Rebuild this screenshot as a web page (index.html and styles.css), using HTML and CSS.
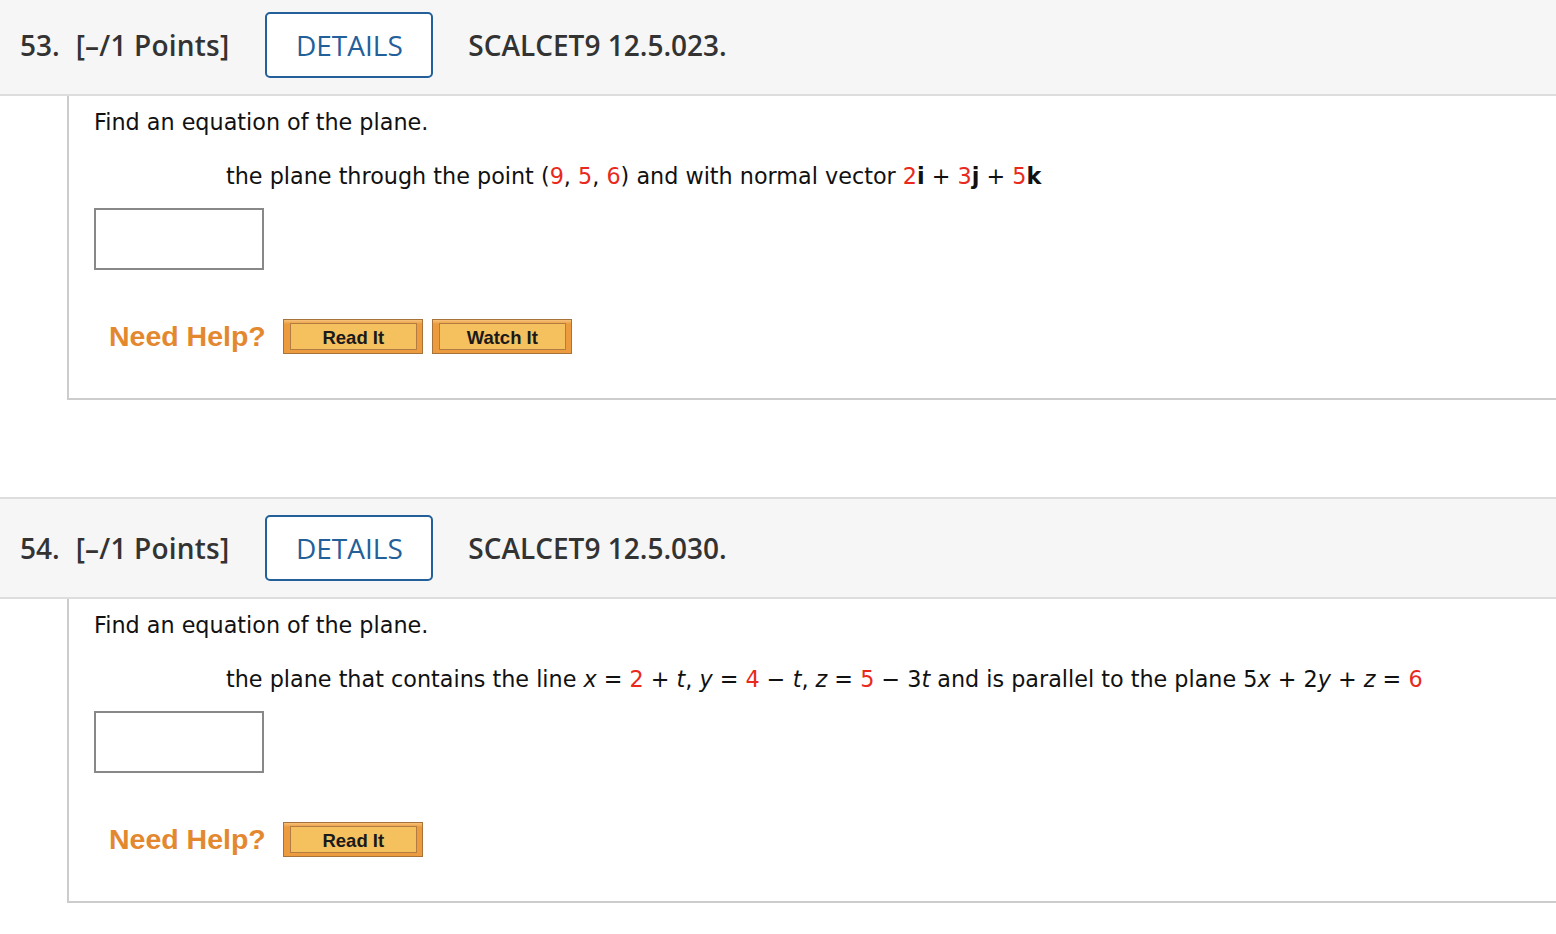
FILE: index.html
```html
<!DOCTYPE html>
<html>
<head>
<meta charset="utf-8">
<link rel="stylesheet" href="styles.css">
</head>
<body>
<div class="page">
  <section class="question">
    <div class="qhead">
      <span class="qnum">53.</span>
      <span class="qpts">[–/1 Points]</span>
      <button class="details">DETAILS</button>
      <span class="qcode">SCALCET9 12.5.023.</span>
    </div>
    <div class="qbody">
      <p class="prompt">Find an equation of the plane.</p>
      <p class="statement">the plane through the point (<span class="red">9</span>, <span class="red">5</span>, <span class="red">6</span>) and with normal vector <span class="red">2</span><b>i</b> + <span class="red">3</span><b>j</b> + <span class="red">5</span><b>k</b></p>
      <div class="answer"></div>
      <div class="help">
        <span class="needhelp">Need Help?</span>
        <span class="hbtn"><span class="hbtn-in">Read It</span></span>
        <span class="hbtn"><span class="hbtn-in">Watch It</span></span>
      </div>
    </div>
  </section>

  <section class="question second">
    <div class="qhead">
      <span class="qnum">54.</span>
      <span class="qpts">[–/1 Points]</span>
      <button class="details">DETAILS</button>
      <span class="qcode">SCALCET9 12.5.030.</span>
    </div>
    <div class="qbody">
      <p class="prompt">Find an equation of the plane.</p>
      <p class="statement math">the plane that contains the line <i>x</i> = <span class="red">2</span> + <i>t</i>, <i>y</i> = <span class="red">4</span> − <i>t</i>, <i>z</i> = <span class="red">5</span> − 3<i>t</i> and is parallel to the plane 5<i>x</i> + 2<i>y</i> + <i>z</i> = <span class="red">6</span></p>
      <div class="answer"></div>
      <div class="help">
        <span class="needhelp">Need Help?</span>
        <span class="hbtn"><span class="hbtn-in">Read It</span></span>
      </div>
    </div>
  </section>
</div>
</body>
</html>
```

FILE: styles.css
```css
html, body {
  margin: 0;
  padding: 0;
  background: #ffffff;
}

.page {
  margin-top: -6px;
}

.question.second {
  margin-top: 97px;
}

.qhead {
  display: flex;
  align-items: center;
  background: #f6f6f6;
  border-top: 2px solid #dddddd;
  border-bottom: 2px solid #dddddd;
  padding: 16px 0 16px 20px;
  font-family: "Open Sans", "Liberation Sans", sans-serif;
  font-weight: 600;
  font-size: 28px;
  color: #333333;
}

.qnum {
  margin-right: 16px;
}

.qpts {
  margin-right: 36px;
  letter-spacing: 0.2px;
}

.details {
  box-sizing: border-box;
  width: 168px;
  height: 66px;
  border: 2px solid #23609a;
  border-radius: 5px;
  background: #ffffff;
  color: #23609a;
  font-family: "Open Sans", "Liberation Sans", sans-serif;
  font-size: 28px;
  font-weight: 500;
  padding: 0;
  margin-right: 35px;
}

.qcode {
  color: #333333;
}

.qbody {
  margin-left: 67px;
  border-left: 2px solid #cccccc;
  border-bottom: 2px solid #cccccc;
  padding: 13px 0 44px 25px;
  font-family: "DejaVu Sans", Verdana, sans-serif;
  font-size: 22.3px;
  color: #111111;
}

.prompt {
  margin: 0;
  line-height: 26px;
}

.statement {
  margin: 28px 0 0 132px;
  line-height: 26px;
}

.red {
  color: #e8291c;
}

.answer {
  box-sizing: border-box;
  width: 170px;
  height: 62px;
  border: 2px solid #888888;
  margin-top: 19px;
}

.help {
  display: flex;
  align-items: center;
  margin-top: 49px;
  padding-left: 15px;
}

.needhelp {
  font-family: "Liberation Sans", Arial, sans-serif;
  font-weight: 700;
  font-size: 28.5px;
  color: #e3882f;
  margin-right: 17px;
}

.hbtn {
  box-sizing: border-box;
  width: 140px;
  height: 35px;
  border: 1px solid #a8733a;
  background: linear-gradient(#f6c27a 0, #ec9c3e 4px, #ec9c3e 100%);
  padding: 3px 5px 3px 6px;
  margin-right: 9px;
  display: flex;
}

.hbtn-in {
  flex: 1;
  border: 1px solid #b27c42;
  background: #f5c05e;
  display: flex;
  align-items: center;
  justify-content: center;
  padding-top: 2px;
  font-family: "Liberation Sans", Arial, sans-serif;
  font-weight: 700;
  font-size: 18.5px;
  color: #1a1a1a;
}
```
